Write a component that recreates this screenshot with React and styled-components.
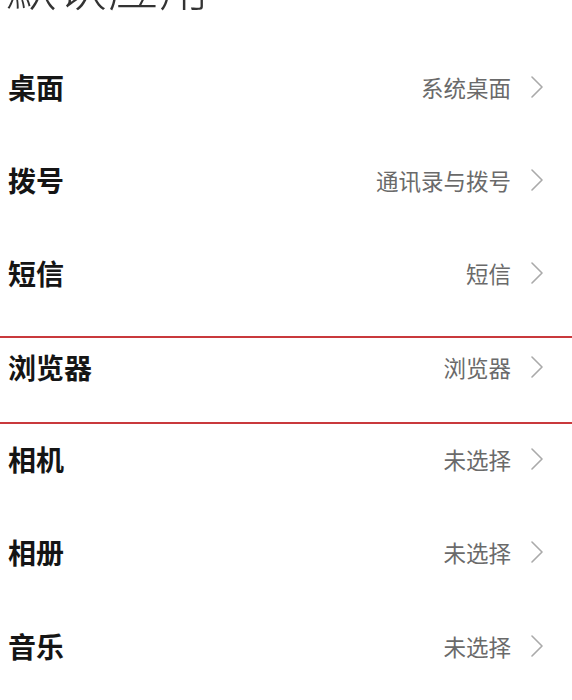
import React from 'react';
import styled, { createGlobalStyle } from 'styled-components';

const GlobalStyle = createGlobalStyle`
    html, body {
        margin: 0;
        padding: 0;
        background: #ffffff;
    }

    body {
        font-family: "Noto Sans CJK SC", "Noto Sans", sans-serif;
        overflow: hidden;
    }
`;

const Page = styled.div`
    width: 572px;
    height: 700px;
    overflow: hidden;
    background: #ffffff;
`;

const Title = styled.h1`
    margin: -41px 0 0 0;
    padding-left: 6px;
    font-size: 50px;
    line-height: 50px;
    font-weight: 300;
    color: #333333;
    letter-spacing: 1px;
`;

const List = styled.div`
    display: flex;
    flex-direction: column;
    padding-top: 31px;
`;

const Row = styled.div`
    position: relative;
    display: flex;
    align-items: center;
    justify-content: space-between;
    height: ${(p) => p.$height || 93}px;
    padding: 0 29px 0 8px;
`;

/* red frame drawn over the selected row */
const Highlight = styled.div`
    position: absolute;
    left: 0;
    right: 0;
    top: 16px;
    height: 84px;
    border-top: 2px solid #c9393c;
    border-bottom: 2px solid #c9393c;
    pointer-events: none;
`;

const Label = styled.span`
    font-size: 28px;
    font-weight: 700;
    color: #151515;
`;

const Value = styled.div`
    display: flex;
    align-items: center;
    gap: 20px;
    font-size: 22.5px;
    color: #6a6a6a;
`;

const Chevron = () => (
    <svg width="12" height="22" viewBox="0 0 12 22" fill="none">
        <path d="M1 1 L11 11 L1 21" stroke="#aaaaaa" strokeWidth="1.6" strokeLinecap="round" strokeLinejoin="round" />
    </svg>
);

const items = [
    { label: '桌面', value: '系统桌面', height: 94 },
    { label: '拨号', value: '通讯录与拨号', height: 91 },
    { label: '短信', value: '短信', height: 95 },
    { label: '浏览器', value: '浏览器', height: 93, selected: true },
    { label: '相机', value: '未选择', height: 92 },
    { label: '相册', value: '未选择', height: 94 },
    { label: '音乐', value: '未选择', height: 93 },
];

export default function App() {
    return (
        <Page>
            <GlobalStyle />
            <Title>默认应用</Title>
            <List>
                {items.map((item) => (
                    <Row key={item.label} $height={item.height}>
                        {item.selected && <Highlight />}
                        <Label>{item.label}</Label>
                        <Value>
                            {item.value}
                            <Chevron />
                        </Value>
                    </Row>
                ))}
            </List>
        </Page>
    );
}
